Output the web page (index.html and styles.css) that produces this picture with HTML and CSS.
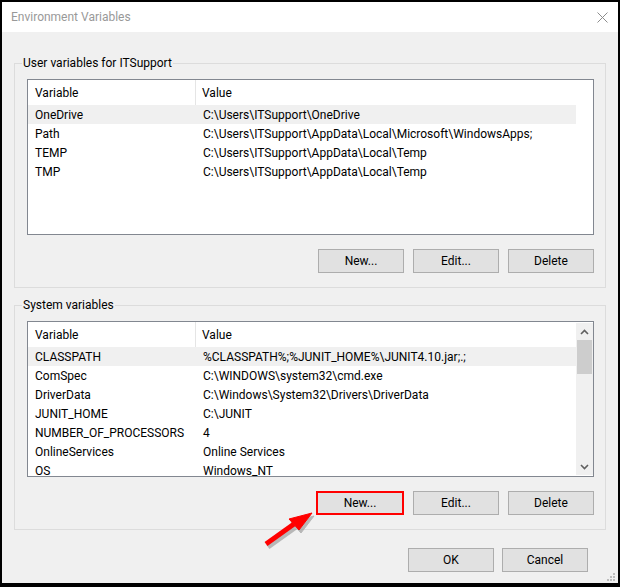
FILE: index.html
```html
<!DOCTYPE html>
<html lang="en">
  <head>
    <meta charset="UTF-8" />
    <meta name="viewport" content="width=device-width, initial-scale=1.0" />
    <title>Environment Variables</title>
    <link rel="stylesheet" href="styles.css">
  </head>
  <body>
    <div class="window">
      <div class="titlebar">
        <span class="title">Environment Variables</span>
        <svg class="close" width="11" height="11" viewBox="0 0 11 11">
          <path d="M0.5 0.5 L10.5 10.5 M10.5 0.5 L0.5 10.5" stroke="#8c8c8c" stroke-width="1" fill="none" />
        </svg>
      </div>
      <div class="content">
        <fieldset class="group">
          <legend>User variables for ITSupport</legend>
          <div class="list list-user">
            <div class="list-main">
              <div class="row head"><span class="c1">Variable</span><span class="c2">Value</span></div>
              <div class="row sel"><span class="c1">OneDrive</span><span class="c2">C:\Users\ITSupport\OneDrive</span></div>
              <div class="row"><span class="c1">Path</span><span class="c2">C:\Users\ITSupport\AppData\Local\Microsoft\WindowsApps;</span></div>
              <div class="row"><span class="c1">TEMP</span><span class="c2">C:\Users\ITSupport\AppData\Local\Temp</span></div>
              <div class="row"><span class="c1">TMP</span><span class="c2">C:\Users\ITSupport\AppData\Local\Temp</span></div>
            </div>
          </div>
          <div class="buttons">
            <button class="btn">New...</button>
            <button class="btn">Edit...</button>
            <button class="btn">Delete</button>
          </div>
        </fieldset>

        <fieldset class="group group-sys">
          <legend>System variables</legend>
          <div class="list list-sys">
            <div class="list-main">
              <div class="row head"><span class="c1">Variable</span><span class="c2">Value</span></div>
              <div class="row sel"><span class="c1">CLASSPATH</span><span class="c2">%CLASSPATH%;%JUNIT_HOME%\JUNIT4.10.jar;.;</span></div>
              <div class="row"><span class="c1">ComSpec</span><span class="c2">C:\WINDOWS\system32\cmd.exe</span></div>
              <div class="row"><span class="c1">DriverData</span><span class="c2">C:\Windows\System32\Drivers\DriverData</span></div>
              <div class="row"><span class="c1">JUNIT_HOME</span><span class="c2">C:\JUNIT</span></div>
              <div class="row"><span class="c1">NUMBER_OF_PROCESSORS</span><span class="c2">4</span></div>
              <div class="row"><span class="c1">OnlineServices</span><span class="c2">Online Services</span></div>
              <div class="row"><span class="c1">OS</span><span class="c2">Windows_NT</span></div>
            </div>
            <div class="scrollbar">
              <svg class="arrow-up" width="9" height="6" viewBox="0 0 9 6">
                <path d="M1 5 L4.5 1.5 L8 5" stroke="#606060" stroke-width="1.6" fill="none" />
              </svg>
              <div class="thumb"></div>
              <svg class="arrow-down" width="9" height="6" viewBox="0 0 9 6">
                <path d="M1 1 L4.5 4.5 L8 1" stroke="#606060" stroke-width="1.6" fill="none" />
              </svg>
            </div>
          </div>
          <div class="buttons">
            <button class="btn btn-marked">New...</button>
            <button class="btn">Edit...</button>
            <button class="btn">Delete</button>
          </div>
        </fieldset>

        <div class="buttons footer">
          <button class="btn">OK</button>
          <button class="btn">Cancel</button>
        </div>
      </div>

      <!-- red callout arrow over the dialog -->
      <svg class="callout" width="70" height="55" viewBox="0 0 70 55">
        <g fill="#8a8a8a" stroke="#8a8a8a" opacity="0.55" transform="translate(2 3)">
          <line x1="14" y1="42" x2="42" y2="22" stroke-width="5" />
          <polygon points="60,11 37,17 47,28" stroke-width="1" />
        </g>
        <g fill="#ff0000" stroke="#ff0000">
          <line x1="14" y1="42" x2="42" y2="22" stroke-width="5" />
          <polygon points="60,11 37,17 47,28" stroke-width="1" />
        </g>
      </svg>

      <svg class="grip" width="10" height="10" viewBox="0 0 10 10">
        <rect x="7" y="1" width="2" height="2" fill="#bcbcbc" />
        <rect x="4" y="4" width="2" height="2" fill="#bcbcbc" />
        <rect x="7" y="4" width="2" height="2" fill="#bcbcbc" />
        <rect x="1" y="7" width="2" height="2" fill="#bcbcbc" />
        <rect x="4" y="7" width="2" height="2" fill="#bcbcbc" />
        <rect x="7" y="7" width="2" height="2" fill="#bcbcbc" />
      </svg>
    </div>
  </body>
</html>
```

FILE: styles.css
```css
* {
  margin: 0;
  padding: 0;
  box-sizing: border-box;
}
body {
  background: #000;
  font-family: Roboto, "Liberation Sans", Arial, sans-serif;
  font-size: 12px;
  color: #000;
}
.window {
  position: relative;
  width: 620px;
  height: 587px;
  border: 2px solid #000;
  border-bottom-width: 4px;
  background: #f0f0f0;
  display: flex;
  flex-direction: column;
}
.titlebar {
  height: 30px;
  background: #fff;
  display: flex;
  align-items: center;
  justify-content: space-between;
  padding: 0 10px 1px 9px;
}
.title {
  color: #999;
}
.close {
  display: block;
  margin-top: 2px;
}
.content {
  flex: 1;
  padding: 23px 12px 0 12px;
}
.group {
  border: 1px solid #dcdcdc;
  padding: 0 11px 14px 12px;
}
.group legend {
  margin-left: -5px;
  padding: 0 1px;
  line-height: 16px;
}
.group-sys {
  margin-top: 9px;
}
.list {
  margin-top: 8px;
  background: #fff;
  border: 1px solid #828790;
  display: flex;
  overflow: hidden;
}
.list-user {
  height: 156px;
}
.list-sys {
  height: 156px;
}
.list-main {
  width: 548px;
}
.row {
  display: flex;
  height: 19px;
  align-items: center;
  white-space: nowrap;
}
.row.head {
  height: 25px;
}
.row.sel {
  background: #f0f0f0;
}
.c1 {
  width: 168px;
  padding-left: 7px;
  flex: none;
}
.c2 {
  padding-left: 7px;
}
.head .c1 {
  border-right: 1px solid #e5e5e5;
  align-self: stretch;
  display: flex;
  align-items: center;
}
.head .c2 {
  padding-left: 6px;
}
.scrollbar {
  width: 17px;
  margin-top: 1px;
  margin-bottom: 1px;
  background: #f0f0f0;
  display: flex;
  flex-direction: column;
  align-items: center;
}
.arrow-up {
  margin-top: 6px;
}
.thumb {
  width: 15px;
  height: 34px;
  margin-top: 5px;
  background: #cdcdcd;
}
.arrow-down {
  margin-top: auto;
  margin-bottom: 5px;
}
.buttons {
  display: flex;
  justify-content: flex-end;
  gap: 9px;
  margin-top: 14px;
}
.btn {
  width: 86px;
  height: 24px;
  background: #e1e1e1;
  border: 1px solid #adadad;
  font-family: inherit;
  font-size: 12px;
  color: #000;
}
.btn-marked {
  border: 2px solid #ff0000;
  width: 88px;
}
.footer {
  margin-top: 18px;
  padding-right: 18px;
  gap: 8px;
}
.callout {
  position: absolute;
  left: 250px;
  top: 500px;
}
.grip {
  position: absolute;
  right: 2px;
  bottom: 1px;
}
```
